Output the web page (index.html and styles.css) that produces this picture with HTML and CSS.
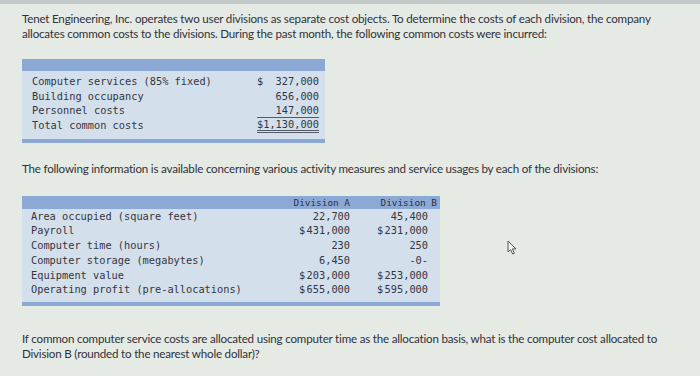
FILE: index.html
```html
<!DOCTYPE html>
<html>
<head>
<meta charset="utf-8">
<link rel="stylesheet" href="styles.css">
</head>
<body>
<div class="topstrip"></div>
<main class="page">
  <p class="text p1">Tenet Engineering, Inc. operates two user divisions as separate cost objects. To determine the costs of each division, the company<br>allocates common costs to the divisions. During the past month, the following common costs were incurred:</p>

  <div class="table t1">
    <div class="bar head"></div>
    <div class="rows">
      <div class="row"><span class="lbl">Computer services (85% fixed)</span><span class="val">$  327,000</span></div>
      <div class="row"><span class="lbl">Building occupancy</span><span class="val">656,000</span></div>
      <div class="row"><span class="lbl">Personnel costs</span><span class="val">147,000</span></div>
      <div class="row"><span class="lbl">Total common costs</span><span class="val"><span class="total">$1,130,000</span></span></div>
    </div>
    <div class="bar foot"></div>
  </div>

  <p class="text p2">The following information is available concerning various activity measures and service usages by each of the divisions:</p>

  <div class="table t2">
    <div class="row hrow"><span class="lbl"></span><span class="ca">Division A</span><span class="cb">Division B</span></div>
    <div class="rows">
      <div class="row"><span class="lbl">Area occupied (square feet)</span><span class="ca">22,700</span><span class="cb">45,400</span></div>
      <div class="row"><span class="lbl">Payroll</span><span class="ca"><span class="d">$</span>431,000</span><span class="cb"><span class="d">$</span>231,000</span></div>
      <div class="row"><span class="lbl">Computer time (hours)</span><span class="ca">230</span><span class="cb">250</span></div>
      <div class="row"><span class="lbl">Computer storage (megabytes)</span><span class="ca">6,450</span><span class="cb">-0-</span></div>
      <div class="row"><span class="lbl">Equipment value</span><span class="ca"><span class="d">$</span>203,000</span><span class="cb"><span class="d">$</span>253,000</span></div>
      <div class="row"><span class="lbl">Operating profit (pre-allocations)</span><span class="ca"><span class="d">$</span>655,000</span><span class="cb"><span class="d">$</span>595,000</span></div>
    </div>
    <div class="bar foot"></div>
  </div>

  <p class="text p3">If common computer service costs are allocated using computer time as the allocation basis, what is the computer cost allocated to<br>Division B (rounded to the nearest whole dollar)?</p>
</main>
<svg class="cursor" width="11" height="15" viewBox="0 0 11 15"><path d="M1 1 L1 12 L3.6 9.6 L5.6 14 L7.4 13.2 L5.4 8.9 L9 8.9 Z" fill="#f4f4f4" stroke="#555" stroke-width="1" stroke-linejoin="round"/></svg>
</body>
</html>
```

FILE: styles.css
```css
html, body {
  margin: 0;
  padding: 0;
}
body {
  width: 700px;
  height: 376px;
  overflow: hidden;
  background: #e5eae5;
  position: relative;
  color: #34363d;
}
.topstrip {
  height: 4px;
  background: #c3c8c8;
}
.page {
  padding: 0 0 0 22px;
}
.text {
  margin: 0;
  font-family: Lato, "Liberation Sans", sans-serif;
  font-size: 11.6px;
  line-height: 15px;
  white-space: nowrap;
  letter-spacing: -0.2px;
  color: #30323a;
}
.p1 { padding-top: 7px; }
.p2 { margin-top: 18px; }
.p3 { margin-top: 25px; }

.table {
  background: #d3dfeb;
  font-family: "DejaVu Sans Mono", "Liberation Mono", monospace;
  font-size: 10.3px;
  color: #33363f;
}
.bar { background: #8ca9d5; }
.t1 {
  width: 303px;
  margin-top: 18px;
}
.t1 .head { height: 12px; margin-bottom: 3px; }
.t1 .rows { padding-bottom: 6px; }
.foot { height: 4px; }
.row {
  display: flex;
  align-items: center;
  height: 14.7px;
  line-height: 14.7px;
}
.lbl {
  flex: 1;
  padding-left: 10px;
  white-space: pre;
}
.t1 .val {
  white-space: pre;
  padding-right: 6px;
  text-align: right;
}
.total {
  display: inline-block;
  border-top: 1px solid #555a66;
  border-bottom: 3px double #555a66;
  line-height: 12px;
}
.t2 {
  width: 418px;
  margin-top: 20px;
}
.t2 .lbl { padding-left: 9px; }
.hrow {
  background: #8ca9d5;
  height: 13px;
  line-height: 13px;
  font-size: 9.4px;
  color: #2b3140;
}
.ca {
  width: 60px;
  text-align: right;
  white-space: pre;
}
.cb {
  width: 78px;
  padding-right: 12px;
  text-align: right;
  white-space: pre;
}
.hrow .cb { padding-right: 3px; width: 87px; }
.t2 .rows { padding-bottom: 5px; }
.d { margin-right: 1.5px; }
.cursor {
  position: absolute;
  left: 507px;
  top: 240px;
}
```
